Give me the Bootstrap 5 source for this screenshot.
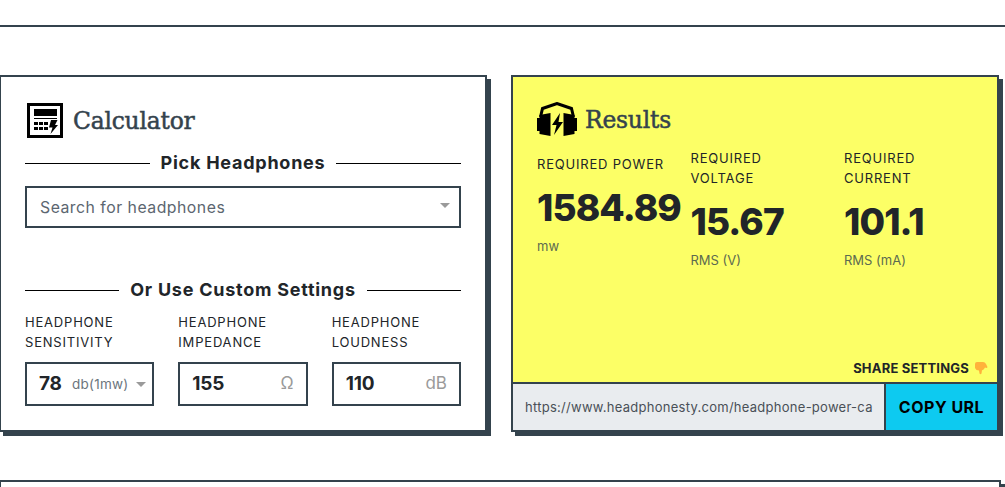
<!DOCTYPE html>
<html lang="en">
<head>
    <meta charset="UTF-8">
    <title>Headphone Power Calculator</title>
    <link href="https://cdn.jsdelivr.net/npm/bootstrap@5.3.2/dist/css/bootstrap.min.css" rel="stylesheet">
    <style>
        html, body { height: 487px; overflow: hidden; }
        body { font-family: "Inter", "Liberation Sans", sans-serif; color: #212529; background: #fff; }
        .top-rule { height: 2px; background: #34434d; margin-top: 25px; margin-bottom: 48px; }
        .calc-row { width: 1024px; margin-left: -13px; margin-right: 0; }
        .calc-col { padding: 0 12px; }
        .panel { border: 2px solid #34434d; box-shadow: 4px 4px 0 #34434d; height: 357px; background: #fff; }
        .panel-results { background: #fcff66; }
        .panel-body { padding: 24px 24px 0; }
        .panel-title { font-family: "DejaVu Serif", serif; font-size: 23.4px; font-weight: 400; color: #34434d; margin: 0; padding-top: 3px; letter-spacing: -.2px; -webkit-text-stroke: .5px #34434d; }
        .title-row { height: 38px; gap: 10px; }
        .calc-icon { margin-left: 2px; }
        .divider { font-weight: 700; font-size: 18px; line-height: 24px; gap: 11px; color: #212529; letter-spacing: .75px; }
        .divider::before, .divider::after { content: ""; flex: 1; border-top: 1px solid #000; }
        .divider-first { margin-top: 12px; }
        .box { border: 2px solid #34434d; }
        .search-box { height: 42px; margin-top: 11px; margin-bottom: 50px; padding: 0 9px 0 13px; font-size: 15.8px; color: #5c6670; }
        .search-input, .num-input { border: 0; padding: 0; background: transparent; outline: 0; min-width: 0; width: 100%; }
        .search-input { padding-top: 1px; }
        .search-input::placeholder { color: #5c6670; opacity: 1; letter-spacing: .5px; }
        .caret { width: 0; height: 0; border-left: 5px solid transparent; border-right: 5px solid transparent; border-top: 5px solid #9a9a9a; flex: none; }
        .search-box .caret { margin-bottom: 3px; }
        .field-row { gap: 24px; margin-top: 10px; }
        .field { flex: 1 1 0; min-width: 0; }
        .field-label { font-size: 13px; line-height: 20px; height: 40px; color: #212529; text-transform: uppercase; letter-spacing: .8px; margin-bottom: 10px; white-space: nowrap; }
        .num-box { height: 44px; padding: 0 12px; }
        .num-input { font-size: 19px; font-weight: 700; color: #212529; letter-spacing: -.2px; padding-top: 1px; }
        .num-short { width: 33px; flex: none; }
        .unit { font-size: 17px; color: #9a9a9a; flex: none; }
        .unit-db { font-size: 13.5px; color: #6c757d; margin-right: 7px; letter-spacing: .25px; white-space: nowrap; }
        .results-title { height: 36px; gap: 8px; }
        .stats { flex: 1; }
        .stat-grid { margin-top: 11px; }
        .stat { flex: 0 0 153.5px; }
        .stat-power { padding-top: 6px; }
        .stat-label { font-size: 13px; line-height: 20px; text-transform: uppercase; letter-spacing: .8px; color: #212529; white-space: nowrap; }
        .stat-value { font-size: 37px; line-height: 46px; font-weight: 800; color: #212529; margin-top: 11px; letter-spacing: -.9px; }
        .stat-unit { font-size: 13px; line-height: 20px; color: #5c6b50; margin-top: 5px; }
        .share-line { font-size: 13px; font-weight: 700; line-height: 18px; color: #212529; margin-right: -24px; padding-right: 9px; margin-bottom: 5px; gap: 5px; letter-spacing: .2px; }
        .share-group { border-top: 2px solid #34434d; height: 48px; }
        .share-url { border: 0; border-radius: 0; background: #e9ecef; font-size: 13px; color: #495057; padding: 2px 12px 0; letter-spacing: .27px; }
        .share-url[readonly] { background: #e9ecef; }
        .copy-btn { border: 0; border-left: 2px solid #34434d; border-radius: 0; background: #0dcaf0; color: #000; font-weight: 700; font-size: 16px; width: 113px; padding: 0; letter-spacing: .5px; }
        .next-panel { border: 2px solid #34434d; border-bottom: 0; margin: 48px 4px 0 -1px; height: 40px; box-shadow: 4px 4px 0 #34434d; }
    </style>
</head>
<body>

<div class="top-rule"></div>

<div class="row g-0 calc-row">
    <div class="col-6 calc-col">
        <div class="panel d-flex flex-column">
            <div class="panel-body">
                <div class="d-flex align-items-center title-row">
                    <svg class="calc-icon" width="36" height="35" viewBox="0 0 36 35">
                        <rect x="1.500" y="1.500" width="33" height="32" fill="#fff" stroke="#000" stroke-width="3"/>
                        <rect x="7" y="6" width="23" height="7" fill="#000"/>
                        <rect x="7" y="15" width="23" height="1" fill="#000"/>
                        <path d="M7 19h4v3H7zM12 19h4v3h-4zM17 19h4v3h-4zM7 24h4v3H7zM12 24h4v3h-4zM17 24h4v3h-4z" fill="#000"/>
                        <path d="M24 17h6.500L28 22h3l-7.500 9 2-6.500H22z" fill="#000"/>
                    </svg>
                    <h2 class="panel-title">Calculator</h2>
                </div>
                <div class="d-flex align-items-center divider divider-first">Pick Headphones</div>
                <div class="box search-box d-flex align-items-center">
                    <input class="search-input" type="text" placeholder="Search for headphones">
                    <span class="caret"></span>
                </div>
                <div class="d-flex align-items-center divider">Or Use Custom Settings</div>
                <div class="d-flex field-row">
                    <div class="field">
                        <div class="field-label">Headphone<br>Sensitivity</div>
                        <div class="box num-box d-flex align-items-center">
                            <input class="num-input num-short" type="text" value="78">
                            <span class="unit-db">db(1mw)</span>
                            <span class="caret"></span>
                        </div>
                    </div>
                    <div class="field">
                        <div class="field-label">Headphone<br>Impedance</div>
                        <div class="box num-box d-flex align-items-center">
                            <input class="num-input" type="text" value="155">
                            <span class="unit">&Omega;</span>
                        </div>
                    </div>
                    <div class="field">
                        <div class="field-label">Headphone<br>Loudness</div>
                        <div class="box num-box d-flex align-items-center">
                            <input class="num-input" type="text" value="110">
                            <span class="unit">dB</span>
                        </div>
                    </div>
                </div>
            </div>
        </div>
    </div>
    <div class="col-6 calc-col">
        <div class="panel panel-results d-flex flex-column">
            <div class="panel-body stats d-flex flex-column">
                <div class="d-flex align-items-center results-title">
                    <svg width="40" height="35" viewBox="0 0 40 35">
                        <path d="M3.500 15 5.500 6.500 20 1.500 34.500 6.500 36.500 15" fill="none" stroke="#000" stroke-width="3"/>
                        <path d="M0 16h2.500v-3l11-2v23l-11-2v-3H0zM40 16h-2.500v-3l-11-2v23l11-2v-3H40z" fill="#000"/>
                        <path d="M23 11 15 23h4.500L17 33l9-13h-4.500z" fill="#000"/>
                    </svg>
                    <h2 class="panel-title">Results</h2>
                </div>
                <div class="d-flex align-items-start stat-grid">
                    <div class="stat stat-power">
                        <div class="stat-label">Required Power</div>
                        <div class="stat-value">1584.89</div>
                        <div class="stat-unit">mw</div>
                    </div>
                    <div class="stat">
                        <div class="stat-label">Required<br>Voltage</div>
                        <div class="stat-value">15.67</div>
                        <div class="stat-unit">RMS (V)</div>
                    </div>
                    <div class="stat">
                        <div class="stat-label">Required<br>Current</div>
                        <div class="stat-value">101.1</div>
                        <div class="stat-unit">RMS (mA)</div>
                    </div>
                </div>
                <div class="d-flex justify-content-end align-items-center share-line mt-auto">
                    <span>SHARE SETTINGS</span>
                    <svg width="14" height="14" viewBox="0 0 14 14">
                        <path d="M1 3Q1 1 3 1H9Q11 1 12 3L13.500 6Q13 7.500 11 6.500L10 8Q9 9.500 8 9L7.500 12.500Q6.500 14 5.500 12.500L5 9.500Q2 9.500 1 7z" fill="#ffb13b"/>
                    </svg>
                </div>
            </div>
            <div class="input-group share-group flex-nowrap">
                <input class="form-control share-url" type="text" readonly value="https://www.headphonesty.com/headphone-power-calculator">
                <button class="btn copy-btn" type="button">COPY URL</button>
            </div>
        </div>
    </div>
</div>

<div class="next-panel"></div>

<script src="https://cdn.jsdelivr.net/npm/bootstrap@5.3.2/dist/js/bootstrap.bundle.min.js"></script>
</body>
</html>
